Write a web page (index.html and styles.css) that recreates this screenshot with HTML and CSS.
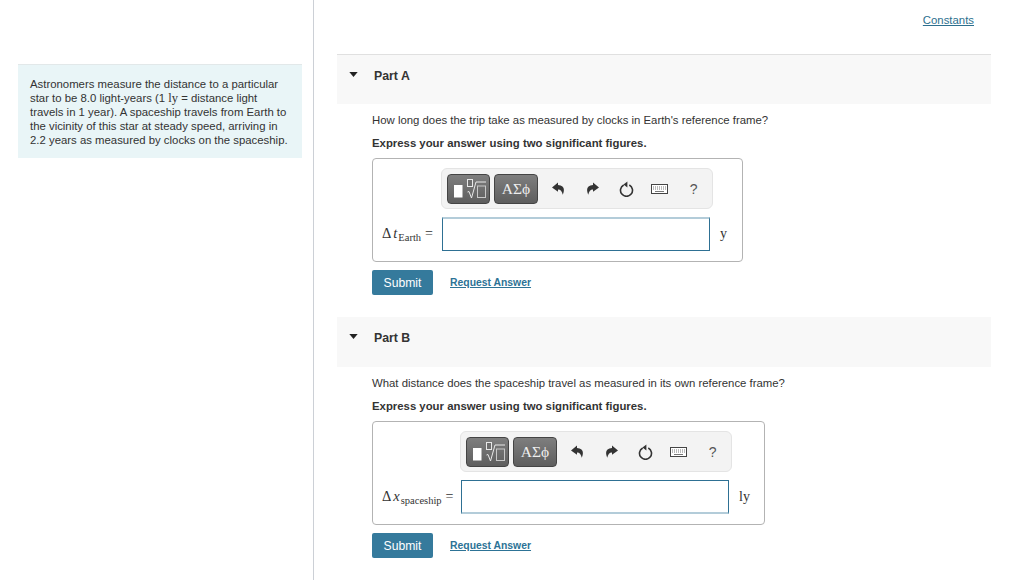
FILE: index.html
```html
<!DOCTYPE html>
<html lang="en">
<head>
<meta charset="utf-8">
<title>Spaceship</title>
<link rel="stylesheet" href="styles.css">
</head>
<body>
<div class="page">
  <aside class="left">
    <div class="intro">Astronomers measure the distance to a particular<br>star to be 8.0 light-years (1 <span class="serif">ly</span> = distance light<br>travels in 1 year). A spaceship travels from Earth to<br>the vicinity of this star at steady speed, arriving in<br>2.2 years as measured by clocks on the spaceship.</div>
  </aside>
  <main class="right">
    <div class="constants-row"><a class="constants" href="#">Constants</a></div>

    <section class="part part-a">
      <header class="part-head">
        <svg class="caret" width="9" height="5" viewBox="0 0 10 6"><path d="M0 0H10L5 6Z"/></svg>
        <span class="part-title">Part A</span>
      </header>
      <div class="part-body">
        <p class="question">How long does the trip take as measured by clocks in Earth's reference frame?</p>
        <p class="instruction">Express your answer using two significant figures.</p>
        <div class="answer-box">
          <div class="toolbar-row toolbar-a">
            <div class="toolbar">
              <span class="tool-btn tool-math">
                <svg width="41" height="28" viewBox="1 1 41 28"><rect x="7" y="11" width="8.500" height="12.500" fill="#fff"/><rect x="20.500" y="5.500" width="5" height="7" fill="#6e6e6e" stroke="#e8e8e8"/><path d="M20.500 18 22 17.500 24.500 24 29 8H39" fill="none" stroke="#e8e8e8"/><rect x="30.500" y="12" width="8" height="11.500" fill="none" stroke="#c8c8c8"/></svg>
              </span>
              <span class="tool-btn tool-greek">ΑΣϕ</span>
              <div class="tool-icons">
                <svg width="13" height="13" viewBox="0 0 13 13"><path d="M6 .5 0 5.500 6 9.800V7.400Q9.500 7.200 10.800 12.800 14.500 3.500 6 3Z" fill="#333"/></svg>
                <svg width="13" height="13" viewBox="0 0 13 13"><path d="M7 .5 13 5.500 7 9.800V7.400Q3.500 7.200 2.200 12.800-1.500 3.500 7 3Z" fill="#333"/></svg>
                <svg width="15" height="16" viewBox="0 0 15 16"><path d="M4.700 4A6 6 0 1 0 10.300 4" fill="none" stroke="#333" stroke-width="1.600"/><path d="M8.400 .5V6.500L4.500 3.500Z" fill="#333"/></svg>
                <svg width="17" height="10" viewBox="0 0 17 10"><rect x=".5" y=".5" width="16" height="9" fill="#fff" stroke="#444"/><path d="M2 3H15M2 5H15" stroke="#777" stroke-dasharray="1 1"/><path d="M4 7.500H13" stroke="#777"/></svg>
                <span class="ic-help">?</span>
              </div>
            </div>
          </div>
          <div class="input-row">
            <span class="math-label">Δ<i>t</i><sub>Earth</sub><span class="eq">=</span></span>
            <div class="answer-input input-a"></div>
            <span class="unit">y</span>
          </div>
        </div>
        <div class="actions">
          <button class="submit">Submit</button>
          <a class="request" href="#">Request Answer</a>
        </div>
      </div>
    </section>

    <section class="part part-b">
      <header class="part-head">
        <svg class="caret" width="9" height="5" viewBox="0 0 10 6"><path d="M0 0H10L5 6Z"/></svg>
        <span class="part-title">Part B</span>
      </header>
      <div class="part-body">
        <p class="question">What distance does the spaceship travel as measured in its own reference frame?</p>
        <p class="instruction">Express your answer using two significant figures.</p>
        <div class="answer-box">
          <div class="toolbar-row toolbar-b">
            <div class="toolbar">
              <span class="tool-btn tool-math">
                <svg width="41" height="28" viewBox="1 1 41 28"><rect x="7" y="11" width="8.500" height="12.500" fill="#fff"/><rect x="20.500" y="5.500" width="5" height="7" fill="#6e6e6e" stroke="#e8e8e8"/><path d="M20.500 18 22 17.500 24.500 24 29 8H39" fill="none" stroke="#e8e8e8"/><rect x="30.500" y="12" width="8" height="11.500" fill="none" stroke="#c8c8c8"/></svg>
              </span>
              <span class="tool-btn tool-greek">ΑΣϕ</span>
              <div class="tool-icons">
                <svg width="13" height="13" viewBox="0 0 13 13"><path d="M6 .5 0 5.500 6 9.800V7.400Q9.500 7.200 10.800 12.800 14.500 3.500 6 3Z" fill="#333"/></svg>
                <svg width="13" height="13" viewBox="0 0 13 13"><path d="M7 .5 13 5.500 7 9.800V7.400Q3.500 7.200 2.200 12.800-1.500 3.500 7 3Z" fill="#333"/></svg>
                <svg width="15" height="16" viewBox="0 0 15 16"><path d="M4.700 4A6 6 0 1 0 10.300 4" fill="none" stroke="#333" stroke-width="1.600"/><path d="M8.400 .5V6.500L4.500 3.500Z" fill="#333"/></svg>
                <svg width="17" height="10" viewBox="0 0 17 10"><rect x=".5" y=".5" width="16" height="9" fill="#fff" stroke="#444"/><path d="M2 3H15M2 5H15" stroke="#777" stroke-dasharray="1 1"/><path d="M4 7.500H13" stroke="#777"/></svg>
                <span class="ic-help">?</span>
              </div>
            </div>
          </div>
          <div class="input-row">
            <span class="math-label">Δ<i>x</i><sub>spaceship</sub><span class="eq">=</span></span>
            <div class="answer-input input-b"></div>
            <span class="unit">ly</span>
          </div>
        </div>
        <div class="actions">
          <button class="submit">Submit</button>
          <a class="request" href="#">Request Answer</a>
        </div>
      </div>
    </section>
  </main>
</div>
</body>
</html>
```
FILE: styles.css
```css
* { box-sizing: border-box; }
html, body { margin: 0; height: 100%; }
body {
  background: #fff;
  font-family: "Liberation Sans", Arial, sans-serif;
  color: #333;
  font-size: 11.37px;
  overflow: hidden;
}
.page { display: flex; height: 580px; overflow: hidden; }
.left {
  width: 314px;
  flex: none;
  border-right: 1px solid #ccd0d6;
  padding: 64px 11px 0 18px;
}
.intro {
  background: #e9f5f7;
  border-top: 1px solid #e2e8e9;
  height: 94px;
  padding: 12px 0 0 12px;
  font-size: 11.37px;
  line-height: 14px;
  white-space: nowrap;
}
.serif { font-family: "Liberation Serif", serif; font-size: 12.5px; line-height: 1; }
.right { flex: 1; padding: 0 33px 0 23px; }
.constants-row { height: 54px; padding: 14px 17px 0 0; text-align: right; line-height: 13px; }
.constants { color: #2d6f8e; font-size: 11.37px; }
.part-head {
  height: 50px;
  background: #f8f8f8;
  display: flex;
  align-items: flex-start;
  padding: 14px 0 0 12px;
}
.part-a .part-head { border-top: 1px solid #e0e0e0; }
.caret { fill: #222; flex: none; margin-top: 3px; }
.part-title { margin-left: 16px; font-weight: 700; font-size: 12.3px; line-height: 14px; color: #333; }
.part-body { padding: 0 0 0 35px; }
.question { margin: 0; padding-top: 10px; font-size: 11.37px; line-height: 13px; }
.instruction { margin: 0; padding-top: 10px; font-weight: 700; font-size: 11.37px; line-height: 13px; }
.answer-box {
  width: 371px;
  height: 104px;
  margin-top: 8px;
  border: 1px solid #b3b3b3;
  border-radius: 4px;
  padding: 9px 0 0 9px;
}
.part-b .answer-box { width: 393px; }
.toolbar-row { display: flex; }
.toolbar-a { padding-left: 59px; }
.toolbar-b { padding-left: 78px; }
.toolbar {
  width: 272px;
  height: 41px;
  background: #f3f3f3;
  border: 1px solid #e4e4e4;
  border-radius: 6px;
  display: flex;
  align-items: center;
  padding-left: 5px;
  gap: 4px;
}
.tool-btn {
  height: 30px;
  background: linear-gradient(#7e7e7e, #5e5e5e);
  border: 1px solid #444;
  border-radius: 4px;
  display: flex;
  align-items: center;
  justify-content: center;
}
.tool-math { width: 43px; }
.tool-greek { width: 44px; color: #eee; font-family: "Liberation Serif", serif; font-size: 15.5px; }
.tool-icons {
  display: grid;
  grid-template-columns: repeat(5, 33.7px);
  justify-items: center;
  align-items: center;
  height: 30px;
}
.ic-help { font-size: 14px; color: #555; }
.input-row { display: flex; align-items: center; margin-top: 8px; height: 34px; }
.math-label { font-family: "Liberation Serif", serif; font-size: 14.5px; color: #333; white-space: nowrap; width: 60px; }
.math-label i { margin: 0 1px 0 2px; }
.math-label sub { font-size: 10.5px; vertical-align: -3px; line-height: 1; }
.eq { margin-left: 4px; font-size: 14px; }
.part-b .math-label { width: 79px; }
.answer-input { width: 268px; height: 34px; background: #fff; flex: none; }
.input-a { border: 1px solid #2e7093; border-top: 2px solid #b3ccd9; }
.input-b { border: 1px solid #2e7093; border-bottom: 2px solid #b3ccd9; }
.unit { margin-left: 10px; font-family: "Liberation Serif", serif; font-size: 14px; }
.actions { display: flex; align-items: center; margin-top: 8px; }
.submit {
  width: 61px;
  height: 25px;
  background: #357a9c;
  border: 0;
  border-radius: 2px;
  color: #fff;
  font: 12.2px "Liberation Sans", Arial, sans-serif;
  padding: 0;
}
.request { margin-left: 17px; color: #2d7396; font-weight: 700; font-size: 10.4px; }
.part-b { margin-top: 22px; }
```
